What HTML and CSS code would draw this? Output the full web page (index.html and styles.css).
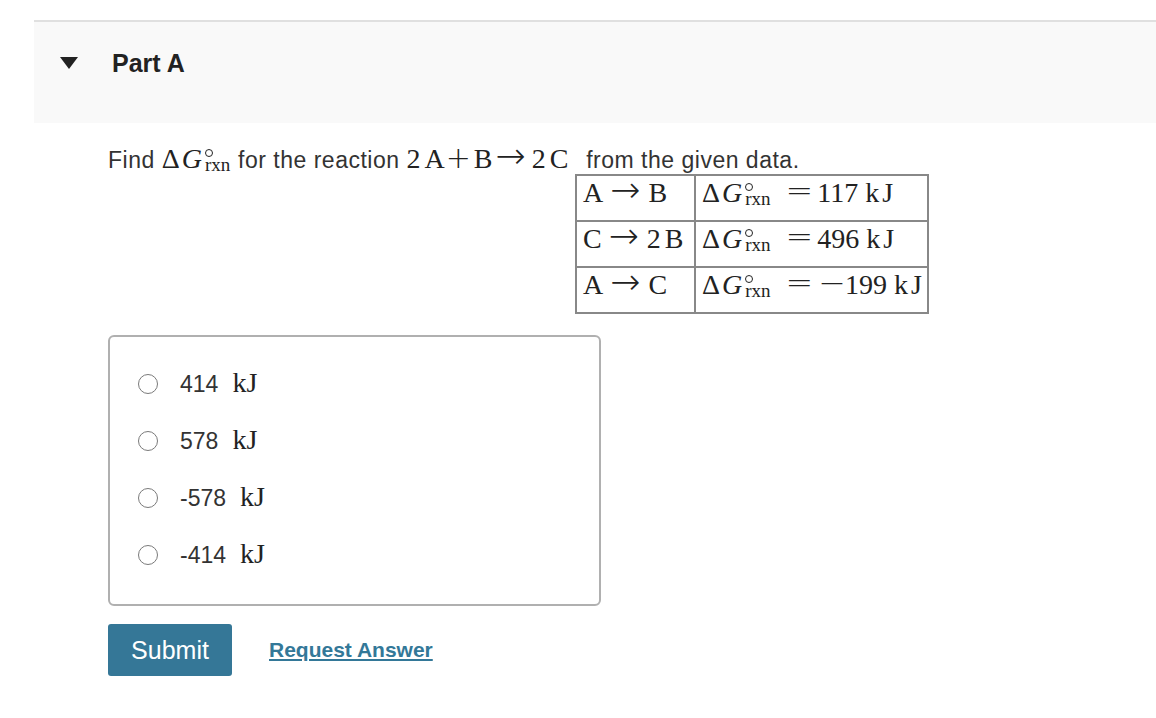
FILE: index.html
```html
<!DOCTYPE html>
<html>
<head>
<meta charset="utf-8">
<link rel="stylesheet" href="styles.css">
</head>
<body>
<div class="part">
  <div class="part-head"><span class="caret"></span><h2 class="part-title">Part A</h2></div>
</div>
<div class="content">
  <p class="q">Find <span class="m"><span class="dl">Δ</span><i>G</i><span class="ss"><span class="deg"></span><span class="sub">rxn</span></span></span> for the reaction <span class="m rx">2<span class="sp"></span>A<span class="bin">+</span>B<span class="arr qa">→</span>2<span class="sp"></span>C</span> from the given data.</p>
  <table class="data">
    <colgroup><col class="c1"><col class="c2"></colgroup>
    <tr>
      <td><span class="m">A<span class="arr ta">→</span>B</span></td>
      <td><span class="m"><span class="dl">Δ</span><i>G</i><span class="ss"><span class="deg"></span><span class="sub">rxn</span></span><span class="eq">=</span>117<span class="sp wide"></span><span class="u">kJ</span></span></td>
    </tr>
    <tr>
      <td><span class="m">C<span class="arr ta">→</span>2<span class="sp"></span>B</span></td>
      <td><span class="m"><span class="dl">Δ</span><i>G</i><span class="ss"><span class="deg"></span><span class="sub">rxn</span></span><span class="eq">=</span>496<span class="sp wide"></span><span class="u">kJ</span></span></td>
    </tr>
    <tr>
      <td><span class="m">A<span class="arr ta">→</span>C</span></td>
      <td><span class="m"><span class="dl">Δ</span><i>G</i><span class="ss"><span class="deg"></span><span class="sub">rxn</span></span><span class="eq">=</span><span class="neg">−</span>199<span class="sp wide"></span><span class="u">kJ</span></span></td>
    </tr>
  </table>
  <div class="choices">
    <label class="choice"><span class="radio"></span><span class="lbl">414<span class="m unit">kJ</span></span></label>
    <label class="choice"><span class="radio"></span><span class="lbl">578<span class="m unit">kJ</span></span></label>
    <label class="choice"><span class="radio"></span><span class="lbl">-578<span class="m unit">kJ</span></span></label>
    <label class="choice"><span class="radio"></span><span class="lbl">-414<span class="m unit">kJ</span></span></label>
  </div>
  <div class="actions">
    <button class="submit" type="button">Submit</button>
    <a class="req" href="#">Request Answer</a>
  </div>
</div>
</body>
</html>
```

FILE: styles.css
```css
html, body {
  margin: 0;
  padding: 0;
  background: #ffffff;
}
body {
  font-family: "Liberation Sans", Arial, sans-serif;
  color: #333333;
}
.part {
  margin: 20px 0 0 34px;
  border-top: 2px solid #e0e0e0;
  background: #f9f9f9;
  height: 103px;
  box-sizing: border-box;
}
.part-head {
  display: flex;
  align-items: center;
  padding: 27px 0 0 26px;
  height: 28px;
}
.caret {
  width: 0;
  height: 0;
  border-left: 9px solid transparent;
  border-right: 9px solid transparent;
  border-top: 12px solid #222222;
  margin-right: 34px;
}
.part-title {
  margin: 0;
  font-size: 25px;
  line-height: 28px;
  font-weight: bold;
  color: #222222;
}
.content {
  padding: 22px 0 0 108px;
}
.q {
  margin: 0;
  font-size: 23px;
  line-height: 30px;
  height: 29px;
  letter-spacing: 0.5px;
  white-space: nowrap;
}
.m {
  font-family: "Liberation Serif", "Times New Roman", serif;
  font-size: 28px;
  line-height: 0;
  letter-spacing: 0;
  color: #222222;
}
.m i {
  font-style: italic;
}
.dl {
  margin-right: 2px;
}
.rx {
  margin-right: 11px;
}
.sp {
  display: inline-block;
  width: 4px;
}
.sp.wide {
  width: 7px;
}
.u {
  letter-spacing: 3px;
}
.bin,
.arr,
.eq,
.neg {
  font-family: "DejaVu Sans", sans-serif;
  font-weight: 200;
}
.bin {
  font-size: 30px;
  margin: 0 3px 0 1px;
}
.arr {
  font-size: 36px;
}
.arr.qa {
  margin: 0 6px 0 3px;
}
.arr.ta {
  margin: 0 8px 0 7px;
}
.eq {
  font-size: 33px;
  margin: 0 4px 0 14px;
}
.neg {
  font-size: 33px;
  margin: 0 -1px 0 1px;
}
.ss {
  display: inline-block;
  vertical-align: -3px;
  margin: 0 1px 0 3px;
  line-height: 0;
}
.deg {
  display: block;
  width: 8px;
  height: 8px;
  border: 1.4px solid #222222;
  border-radius: 50%;
  margin-bottom: 2px;
  box-sizing: border-box;
}
.sub {
  display: block;
  font-size: 19px;
  line-height: 12px;
}
.data {
  margin-left: 467px;
  border-collapse: separate;
  border-spacing: 0;
  table-layout: fixed;
  width: 354px;
  border-top: 2px solid #888888;
  border-left: 2px solid #888888;
}
.c1 { width: 119px; }
.c2 { width: 233px; }
.data td {
  border-right: 2px solid #888888;
  border-bottom: 2px solid #888888;
  height: 46px;
  box-sizing: border-box;
  padding: 0 0 0 6px;
  line-height: 42px;
  white-space: nowrap;
  vertical-align: top;
}
.choices {
  margin-top: 21px;
  width: 493px;
  height: 271px;
  box-sizing: border-box;
  border: 2px solid #b0b0b0;
  border-radius: 6px;
  padding: 18px 0 0 28px;
}
.choice {
  display: flex;
  align-items: center;
  height: 57px;
}
.radio {
  width: 20px;
  height: 20px;
  box-sizing: border-box;
  border: 1.5px solid #7a7a7a;
  border-radius: 50%;
  margin-right: 22px;
  flex: none;
}
.lbl {
  font-size: 23px;
  line-height: 30px;
  color: #333333;
}
.unit {
  margin-left: 14px;
}
.actions {
  display: flex;
  align-items: center;
  margin-top: 18px;
}
.submit {
  width: 124px;
  height: 52px;
  border: none;
  border-radius: 3px;
  background: #357797;
  color: #ffffff;
  font-family: "Liberation Sans", Arial, sans-serif;
  font-size: 25px;
  padding: 0;
}
.req {
  margin-left: 37px;
  font-size: 21px;
  font-weight: bold;
  color: #337898;
  text-decoration: underline;
}
```
